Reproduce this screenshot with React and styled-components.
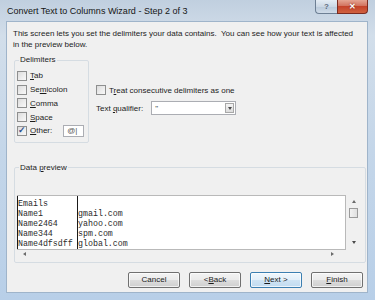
import React from "react"
import styled, { createGlobalStyle } from "styled-components"

const uiFont = `"Liberation Sans", Arial, sans-serif`
const monoFont = `"Liberation Mono", "Courier New", monospace`

const GlobalStyle = createGlobalStyle`
  html, body { margin: 0; padding: 0; }
  body { width: 375px; height: 300px; overflow: hidden; background: #c6d6e7; }
`

const Window = styled.div`
  width: 375px;
  height: 300px;
  display: flex;
  flex-direction: column;
  background: linear-gradient(180deg, #c0cfdf 0%, #d2deea 12%, #c4d6e9 50%, #b8cfe8 100%);
  font-family: ${uiFont};
  font-size: 8px;
  color: #1c1c1c;
`

const TitleBar = styled.div`
  height: 21px;
  flex: none;
  display: flex;
  align-items: flex-start;
  padding-left: 7px;
`

const Title = styled.div`
  font-size: 9px;
  line-height: 10px;
  margin-top: 6px;
  color: #151515;
`

const Controls = styled.div`
  margin-left: auto;
  margin-right: 7px;
  display: flex;
`

const CaptionButton = styled.div`
  height: 14px;
  box-sizing: border-box;
  display: flex;
  align-items: center;
  justify-content: center;
  border: 1px solid #6d7f94;
  border-top: none;
  font-size: 8px;
  font-weight: bold;
`

const HelpButton = styled(CaptionButton)`
  width: 22px;
  border-right: none;
  border-radius: 0 0 0 4px;
  color: #5b6b7c;
  background: linear-gradient(180deg, #e4ecf4 0%, #ccd8e5 50%, #b9c9da 51%, #cfdbe8 100%);
`

const CloseButton = styled(CaptionButton)`
  width: 31px;
  border-color: #7b2b20;
  border-radius: 0 0 4px 0;
  color: #ffffff;
  background: linear-gradient(180deg, #e5a593 0%, #d2735f 45%, #c5432b 50%, #d0613f 100%);
  text-shadow: 0 0 2px #7a2010;
`

const Client = styled.div`
  flex: 1;
  margin: 0 7px 7px 6px;
  background: #f0f0f0;
  border: 1px solid #9fb4ca;
  display: flex;
  flex-direction: column;
  padding: 6px 7px 0 6px;
`

const Intro = styled.p`
  margin: 0;
  line-height: 11px;
  white-space: nowrap;
`

const TopRow = styled.div`
  display: flex;
  margin-top: 5px;
`

const Group = styled.fieldset`
  margin: 0 0 0 1px;
  min-width: 0;
  border: 1px solid #d5dce2;
  border-radius: 2px;
  padding: ${({ $pad }) => $pad};
  width: ${({ $w }) => $w};
  box-sizing: border-box;
`

const Legend = styled.legend`
  padding: 0 1px;
  margin-left: 2px;
  line-height: 10px;
`

const CheckList = styled.div`
  display: flex;
  flex-direction: column;
`

const CheckRow = styled.label`
  display: flex;
  align-items: center;
  height: ${({ $h }) => $h || "13.75px"};
  gap: 3px;
`

const Box = styled.span`
  width: 10px;
  height: 10px;
  box-sizing: border-box;
  border: 1px solid #8e8f8f;
  background: linear-gradient(135deg, #dcdcdc 0%, #eeeeee 60%, #f8f8f8 100%);
  display: flex;
  align-items: center;
  justify-content: center;
  flex: none;
`

const Mark = styled.span`
  color: #2b4f8f;
  font-size: 9px;
  line-height: 9px;
  font-weight: bold;
`

const U = styled.span`
  text-decoration: underline;
`

const SmallInput = styled.div`
  margin-left: 8px;
  width: 21px;
  height: 12px;
  box-sizing: border-box;
  border: 1px solid #abadb3;
  background: #fff;
  padding-left: 3px;
  line-height: 10px;
  color: #555;
`

const Options = styled.div`
  display: flex;
  flex-direction: column;
  margin-left: 7px;
  padding-top: 29px;
`

const QualifierRow = styled.div`
  display: flex;
  align-items: center;
  margin-top: 5px;
  gap: 8px;
`

const Select = styled.div`
  width: 85px;
  height: 14px;
  box-sizing: border-box;
  border: 1px solid #abadb3;
  background: #fff;
  display: flex;
  align-items: center;
  padding-left: 3px;
  color: #444;
`

const DropButton = styled.div`
  margin-left: auto;
  margin-right: 1px;
  width: 9px;
  height: 10px;
  box-sizing: border-box;
  border: 1px solid #a8a8a8;
  background: linear-gradient(180deg, #f5f5f5, #dcdcdc);
  display: flex;
  align-items: center;
  justify-content: center;
`

const Tri = styled.span`
  width: 0;
  height: 0;
  border-left: ${({ $dir }) => ($dir === "left" ? "none" : $dir === "right" ? "3px solid #6a6a6a" : "2.5px solid transparent")};
  border-right: ${({ $dir }) => ($dir === "right" ? "none" : $dir === "left" ? "3px solid #6a6a6a" : "2.5px solid transparent")};
  border-top: ${({ $dir }) => ($dir === "down" ? "3px solid #4a4a4a" : $dir === "up" ? "none" : "2.5px solid transparent")};
  border-bottom: ${({ $dir }) => ($dir === "up" ? "3px solid #6a6a6a" : $dir === "down" ? "none" : "2.5px solid transparent")};
`

const PreviewGroup = styled(Group)`
  margin-top: 20px;
`

const PreviewArea = styled.div`
  display: flex;
  gap: 2px;
`

const Sheet = styled.div`
  flex: 1;
  height: 55px;
  box-sizing: border-box;
  border: 1px solid #b9b9b9;
  border-left: none;
  background: #fff;
  display: flex;
  font-family: ${monoFont};
  font-size: 8.3px;
  color: #2a2a2a;
`

const Column = styled.div`
  width: ${({ $w }) => $w};
  flex: ${({ $w }) => ($w ? "none" : 1)};
  border-left: 1px solid #1a1a1a;
  padding-top: 3px;
  white-space: pre;
`

const Cell = styled.div`
  height: 10px;
  line-height: 10px;
`

const VScroll = styled.div`
  width: 11px;
  height: 55px;
  display: flex;
  flex-direction: column;
  align-items: center;
  padding-top: 5px;
  box-sizing: border-box;
`

const Thumb = styled.div`
  width: 9px;
  height: 10px;
  margin-top: 5px;
  box-sizing: border-box;
  border: 1px solid #9a9a9a;
  background: linear-gradient(90deg, #f2f2f2, #e0e0e0);
`

const Spacer = styled.div`
  flex: 1;
`

const HScroll = styled.div`
  display: flex;
  justify-content: space-between;
  align-items: center;
  height: 9px;
  padding: 0 25px 0 6px;
`

const ButtonRow = styled.div`
  display: flex;
  justify-content: flex-end;
  gap: 9px;
  margin-top: 9px;
  margin-right: -3px;
`

const Button = styled.div`
  width: 52px;
  height: 16px;
  box-sizing: border-box;
  border: 1px solid ${({ $focus }) => ($focus ? "#3c7fb1" : "#707070")};
  border-radius: 2px;
  background: ${({ $focus }) =>
    $focus
      ? "linear-gradient(180deg, #f0f7fc 0%, #e3eff9 50%, #cfe4f4 51%, #c1dbf0 100%)"
      : "linear-gradient(180deg, #f3f3f3 0%, #ebebeb 50%, #dddddd 51%, #cfcfcf 100%)"};
  box-shadow: inset 0 0 0 1px rgba(255, 255, 255, 0.7);
  display: flex;
  align-items: center;
  justify-content: center;
  color: #1a1a1a;
`

const delimiters = [
  { pre: "", u: "T", post: "ab" },
  { pre: "Se", u: "m", post: "icolon" },
  { pre: "", u: "C", post: "omma" },
  { pre: "", u: "S", post: "pace" },
]

const rows = [
  ["Emails", ""],
  ["Name1", "gmail.com"],
  ["Name2464", "yahoo.com"],
  ["Name344", "spm.com"],
  ["Name4dfsdff", "global.com"],
]

const Check = ({ checked }) => <Box>{checked && <Mark>✓</Mark>}</Box>

export default function App() {
  return (
    <>
      <GlobalStyle />
      <Window>
        <TitleBar>
          <Title>Convert Text to Columns Wizard - Step 2 of 3</Title>
          <Controls>
            <HelpButton>?</HelpButton>
            <CloseButton>✕</CloseButton>
          </Controls>
        </TitleBar>
        <Client>
          <Intro>
            This screen lets you set the delimiters your data contains.&nbsp; You can see how your text is affected
            <br />
            in the preview below.
          </Intro>
          <TopRow>
            <Group $w="75px" $pad="4px 2px 4px 2px">
              <Legend>Delimiters</Legend>
              <CheckList>
                {delimiters.map((d) => (
                  <CheckRow key={d.pre + d.u}>
                    <Check />
                    <span>
                      {d.pre}
                      <U>{d.u}</U>
                      {d.post}
                    </span>
                  </CheckRow>
                ))}
                <CheckRow>
                  <Check checked />
                  <span>
                    <U>O</U>ther:
                  </span>
                  <SmallInput>@|</SmallInput>
                </CheckRow>
              </CheckList>
            </Group>
            <Options>
              <CheckRow $h="12px">
                <Check />
                <span>
                  T<U>r</U>eat consecutive delimiters as one
                </span>
              </CheckRow>
              <QualifierRow>
                <span>
                  Text <U>q</U>ualifier:
                </span>
                <Select>
                  "
                  <DropButton>
                    <Tri $dir="down" />
                  </DropButton>
                </Select>
              </QualifierRow>
            </Options>
          </TopRow>
          <PreviewGroup $w="352px" $pad="22px 6px 3px 2px">
            <Legend>
              Data <U>p</U>review
            </Legend>
            <PreviewArea>
              <Sheet>
                <Column $w="59px">
                  {rows.map((r) => (
                    <Cell key={r[0]}>{r[0]}</Cell>
                  ))}
                </Column>
                <Column>
                  {rows.map((r) => (
                    <Cell key={r[0]}>{r[1]}</Cell>
                  ))}
                </Column>
              </Sheet>
              <VScroll>
                <Tri $dir="up" />
                <Thumb />
                <Spacer />
                <Tri $dir="down" />
                <Spacer style={{ flex: "none", height: 6 }} />
              </VScroll>
            </PreviewArea>
            <HScroll>
              <Tri $dir="left" />
              <Tri $dir="right" />
            </HScroll>
          </PreviewGroup>
          <ButtonRow>
            <Button>Cancel</Button>
            <Button>
              &lt; <U>B</U>ack
            </Button>
            <Button $focus>
              <U>N</U>ext &gt;
            </Button>
            <Button>
              <U>F</U>inish
            </Button>
          </ButtonRow>
        </Client>
      </Window>
    </>
  )
}
